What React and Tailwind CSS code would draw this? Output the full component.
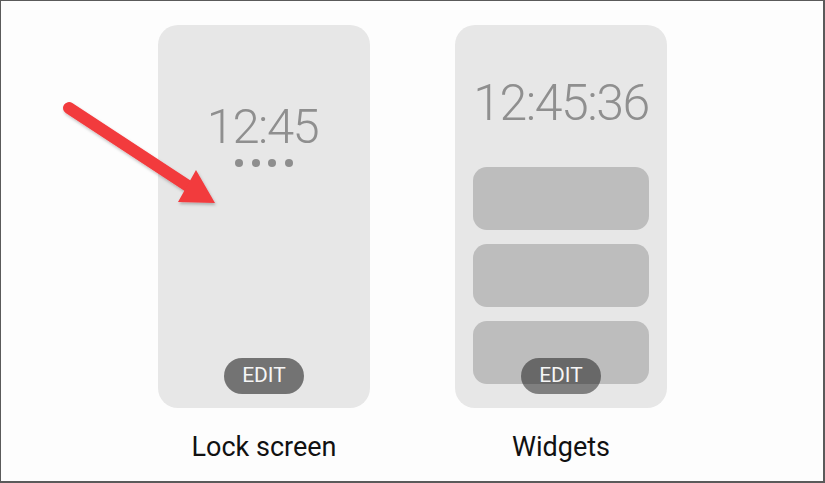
export default function App() {
  const font = { fontFamily: 'Roboto, "Noto Sans", sans-serif' }

  return (
    <div
      className="relative w-[825px] h-[483px] overflow-hidden bg-[#fdfdfd] border-t border-l border-r-2 border-b-2 border-[#5a5a5a]"
      style={font}
    >
      <div className="flex justify-center gap-[85px] pt-[24px] pl-[1px]">

        {/* Lock screen */}
        <div className="flex flex-col items-center">
          <div className="relative w-[212px] h-[383px] rounded-[20px] bg-[#e7e7e7] flex flex-col items-center pt-[77px]">
            <p className="text-[49px] leading-none font-light tracking-[-1.5px] text-[#8f8f8f] -ml-[3px]">12:45</p>
            <div className="flex gap-[8.5px] mt-[8px]">
              <span className="w-[8px] h-[8px] rounded-full bg-[#8e8e8e]" />
              <span className="w-[8px] h-[8px] rounded-full bg-[#8e8e8e]" />
              <span className="w-[8px] h-[8px] rounded-full bg-[#8e8e8e]" />
              <span className="w-[8px] h-[8px] rounded-full bg-[#8e8e8e]" />
            </div>
            <div className="absolute bottom-[14px] left-1/2 -translate-x-1/2 w-[80px] h-[36px] rounded-full bg-black/50 flex items-center justify-center text-[21px] text-[#f6f6f6]">
              EDIT
            </div>
          </div>
          <p className="mt-[26px] text-[27px] leading-none text-[#111]">Lock screen</p>
        </div>

        {/* Widgets */}
        <div className="flex flex-col items-center">
          <div className="relative w-[212px] h-[383px] rounded-[20px] bg-[#e7e7e7] flex flex-col items-center pt-[53px] px-[18px]">
            <p className="text-[50px] leading-none font-light tracking-[-1.5px] text-[#8f8f8f]">12:45:36</p>
            <div className="w-full flex flex-col gap-[14px] mt-[39px]">
              <div className="h-[63px] rounded-[14px] bg-[#bdbdbd]" />
              <div className="h-[63px] rounded-[14px] bg-[#bdbdbd]" />
              <div className="h-[63px] rounded-[14px] bg-[#bdbdbd]" />
            </div>
            <div className="absolute bottom-[14px] left-1/2 -translate-x-1/2 w-[80px] h-[36px] rounded-full bg-black/45 flex items-center justify-center text-[21px] text-[#f6f6f6]">
              EDIT
            </div>
          </div>
          <p className="mt-[26px] text-[27px] leading-none text-[#111]">Widgets</p>
        </div>
      </div>

      {/* Red arrow annotation */}
      <svg className="absolute left-0 top-0" width="825" height="483" viewBox="0 0 825 483">
        <defs>
          <filter id="sh" x="-20%" y="-20%" width="140%" height="140%">
            <feDropShadow dx="1" dy="2" stdDeviation="1.5" floodColor="#000" floodOpacity="0.25" />
          </filter>
        </defs>
        <g filter="url(#sh)">
          <line x1="68" y1="107" x2="190" y2="187" stroke="#f23a3e" strokeWidth="12" strokeLinecap="round" />
          <polygon points="214,202 177,201 195,169" fill="#f23a3e" />
        </g>
      </svg>
    </div>
  )
}
